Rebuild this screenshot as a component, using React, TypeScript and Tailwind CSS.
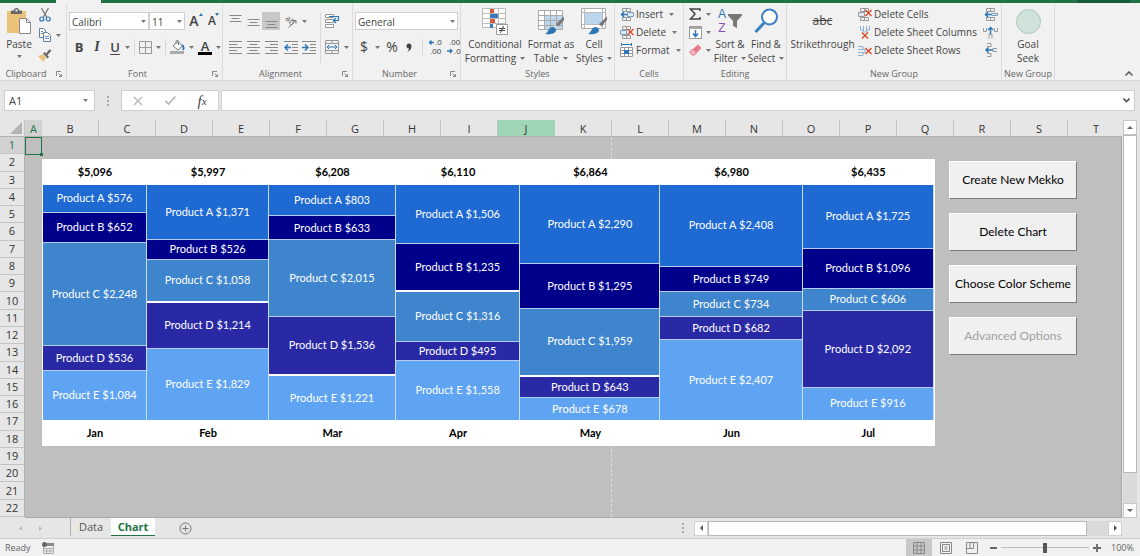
import React from "react";

const UI = "font-['Open_Sans',sans-serif]";
const CAL = "font-['Lato',sans-serif]";

function Caret({ className = "" }: { className?: string }) {
  return (
    <svg className={`shrink-0 ${className}`} width="5" height="3" viewBox="0 0 5 3" aria-hidden="true">
      <path d="M0 0h5L2.5 3z" fill="#777" />
    </svg>
  );
}

type IconProps = { w: number; h: number; children: React.ReactNode; className?: string };
function Icon({ w, h, children, className = "" }: IconProps) {
  return (
    <svg className={`shrink-0 ${className}`} width={w} height={h} viewBox={`0 0 ${w} ${h}`} fill="none" aria-hidden="true">
      {children}
    </svg>
  );
}

function Btn({ label, children, className = "" }: { label: string; children: React.ReactNode; className?: string }) {
  return (
    <button aria-label={label} className={`flex shrink-0 items-center justify-center ${className}`}>
      {children}
    </button>
  );
}

function Group({
  label,
  launcher = false,
  className,
  children,
}: {
  label: string;
  launcher?: boolean;
  className: string;
  children: React.ReactNode;
}) {
  return (
    <section aria-label={label} className={`flex shrink-0 flex-col border-r border-[#dcdcdc] ${className}`}>
      <div className="flex h-[65px] shrink-0">{children}</div>
      <div className="flex h-3 items-center text-[#666]">
        <span className="flex-1 text-center text-[9px] leading-3 whitespace-nowrap">{label}</span>
        {launcher && (
          <Btn label={`${label} settings`} className="w-3.5">
            <Icon w={6} h={6}>
              <path d="M.5 5V.5H5M2.5 2.5l3 3M5.5 3v2.5H3" stroke="#888" />
            </Icon>
          </Btn>
        )}
      </div>
    </section>
  );
}

function BigButton({
  lines,
  icon,
  caret = false,
  className,
}: {
  lines: string[];
  icon: React.ReactNode;
  caret?: boolean;
  className: string;
}) {
  return (
    <button className={`flex shrink-0 flex-col items-center pt-1 ${className}`}>
      <span className="flex h-7 items-center">{icon}</span>
      <span className="mt-0.5 flex flex-col items-center">
        {lines.map((line, i) => (
          <span key={line} className="flex h-3.5 items-center gap-1 text-[10px] leading-3.5 whitespace-nowrap">
            {line}
            {caret && i === lines.length - 1 && <Caret />}
          </span>
        ))}
      </span>
    </button>
  );
}

function SmallButton({ label, icon, caret = false }: { label: string; icon: React.ReactNode; caret?: boolean }) {
  return (
    <button className="flex h-[18px] items-center gap-0.5 text-[10px] leading-3.5 whitespace-nowrap">
      <span className="flex w-3.5 justify-center">{icon}</span>
      {label}
      {caret && <Caret className="ml-1" />}
    </button>
  );
}

function Combo({ label, value, options, className }: { label: string; value: string; options: string[]; className: string }) {
  return (
    <span className={`relative h-[18px] shrink-0 border border-[#cfcfcf] bg-white ${className}`}>
      <select
        aria-label={label}
        defaultValue={value}
        className="block h-4 w-full appearance-none bg-transparent pt-px pl-0.5 text-[10px] leading-4 text-[#444] outline-none"
      >
        {options.map((o) => (
          <option key={o}>{o}</option>
        ))}
      </select>
      <Caret className="pointer-events-none absolute top-[7px] right-0.5" />
    </span>
  );
}

const Lines = ({ d }: { d: string }) => (
  <Icon w={13} h={13}>
    <path d={d} stroke="#888" />
  </Icon>
);

const Sep = ({ className = "h-4" }: { className?: string }) => <span className={`w-px shrink-0 bg-[#d8d8d8] ${className}`} />;

const BrushOverlay = () => (
  <g>
    <path d="M26 8.5 18 16l2.5 2.5L26 12z" fill="#777" />
    <path d="M7 26c3-1 3-5.500 6.500-6.800 2-.7 4.500 1 4.500 3C17.800 25.500 12 27 7 26z" fill="#2e75b6" />
    <path d="m16.500 17.500 3 3" stroke="#fff" />
  </g>
);

const CellBits = () => <path d="M2.500.500h8v3h-8zM6.500.500v3M2.500 9.500h8v3h-8zM6.500 9.500v3" stroke="#999" />;
const RedX = ({ x, y }: { x: number; y: number }) => (
  <path d={`M${x} ${y}l6 6M${x + 6} ${y}l-6 6`} stroke="#d9482b" strokeWidth="1.400" />
);

const ClipboardIcon = (
  <Icon w={26} h={27}>
    <path d="M1 3h19v22H1z" fill="#ebc27a" />
    <path d="M5 2.500h3C8 .800 9 0 10.500 0S13 .800 13 2.500h3V6H5z" fill="#666" />
    <path d="M9.500 1.500h2v2h-2z" fill="#f1f1f1" />
    <path d="M13.500 10.500h7l4 4v11h-11z" fill="#fff" stroke="#888" />
    <path d="M20.500 10.500v4h4" stroke="#888" />
  </Icon>
);

function Ribbon() {
  return (
    <div className="flex h-[78px] shrink-0 overflow-hidden border-b border-[#d5d5d5] bg-[#f1f1f1] text-[#444]">
      <Group label="Clipboard" launcher className="w-[67px]">
        <button className="flex w-[38px] flex-col items-center pt-1">
          <span className="flex h-7 items-center">{ClipboardIcon}</span>
          <span className="mt-0.5 text-[10px] leading-3.5">Paste</span>
          <Caret className="mt-1" />
        </button>
        <div className="flex flex-col items-start gap-1 pt-1">
          <Btn label="Cut" className="h-4 w-3.5">
            <Icon w={12} h={14}>
              <path d="m2.500 0 5.300 9.500M9.500 0 4.200 9.500" stroke="#777" strokeWidth="1.300" />
              <circle cx="2.800" cy="11" r="2" stroke="#2e75b6" strokeWidth="1.200" />
              <circle cx="9.200" cy="11" r="2" stroke="#2e75b6" strokeWidth="1.200" />
            </Icon>
          </Btn>
          <Btn label="Copy" className="h-4 gap-1">
            <Icon w={14} h={14}>
              <path d="M1.500.500h4l2 2v7h-6z" fill="#fff" stroke="#6b7f99" />
              <path d="M5.500 4.500h4l3 3v6h-7z" fill="#fff" stroke="#6b7f99" />
              <path d="M7 8.500h4M7 10.500h4M3 3.500h2M3 5.500h2" stroke="#5b93cc" />
            </Icon>
            <Caret />
          </Btn>
          <Btn label="Format painter" className="h-4 w-3.5">
            <Icon w={14} h={13}>
              <path d="m0 7 5-1.500 3 3.500-3 4z" fill="#ebc27a" />
              <path d="m5 4.500 4.500 5 1.500-1.500-4.500-5z" fill="#666" />
              <path d="M8.500 5.500 12.500 1" stroke="#666" strokeWidth="2.200" />
            </Icon>
          </Btn>
        </div>
      </Group>

      <Group label="Font" launcher className="w-[156px]">
        <div className="flex flex-col gap-[7px] pt-[9px] pl-0.5">
          <div className="flex items-center">
            <Combo label="Font name" value="Calibri" options={["Calibri", "Arial"]} className="w-20" />
            <Combo label="Font size" value="11" options={["10", "11", "12"]} className="w-9" />
            <Btn label="Increase font size" className="relative w-[18px] text-[14px] leading-4 font-semibold">
              A
              <Icon w={4} h={3} className="absolute top-0 right-0">
                <path d="M0 3h4L2 0z" fill="#2e75b6" />
              </Icon>
            </Btn>
            <Btn label="Decrease font size" className="relative w-[18px] text-[12px] leading-4 font-semibold">
              A
              <Icon w={4} h={3} className="absolute top-0 right-0.5">
                <path d="M0 0h4L2 3z" fill="#2e75b6" />
              </Icon>
            </Btn>
          </div>
          <div className="flex h-5 items-center">
            <Btn label="Bold" className="w-5 text-[13px] leading-5 font-bold">B</Btn>
            <Btn label="Italic" className="w-4 font-['Liberation_Serif',serif] text-[14px] leading-5 font-bold italic">I</Btn>
            <Btn label="Underline" className="w-5 text-[13px] leading-5 font-semibold underline underline-offset-2">U</Btn>
            <Caret />
            <Sep className="mx-1 h-4" />
            <Btn label="Borders">
              <Icon w={13} h={13}>
                <path d="M.500.500h12v12H.500zM6.500.500v12M.500 6.500h12" stroke="#999" />
              </Icon>
            </Btn>
            <Caret className="ml-1" />
            <Sep className="mx-1 h-4" />
            <Btn label="Fill colour">
              <Icon w={15} h={14}>
                <path d="m3 6 5-4.500L12.500 6 8 10z" fill="#fff" stroke="#777" />
                <path d="M6 4V1.500C6 0 8.500 0 8.500 1.500V5" stroke="#777" />
                <path d="M12 5c1.500 1 2 3 1 5" stroke="#2e75b6" strokeWidth="1.800" />
                <path d="M0 11h14v3H0z" fill="#aaa" />
              </Icon>
            </Btn>
            <Caret className="ml-1" />
            <Btn label="Font colour" className="ml-1 w-3.5 flex-col">
              <span className="h-3 text-[13px] leading-3 font-semibold">A</span>
              <span className="h-[3px] w-3.5 bg-black" />
            </Btn>
            <Caret className="ml-1" />
          </div>
        </div>
      </Group>

      <Group label="Alignment" launcher className="w-[130px]">
        <div className="flex flex-col gap-[7px] pt-[9px] pl-[3px]">
          <div className="flex h-[18px] items-center">
            <Btn label="Top align" className="h-[18px] w-[18px]"><Lines d="M.500 .500h12M2.500 3.500h8M.500 6.500h12" /></Btn>
            <Btn label="Middle align" className="h-[18px] w-[18px]"><Lines d="M.500 4.500h12M2.500 7.500h8M.500 10.500h12" /></Btn>
            <Btn label="Bottom align" className="h-[18px] w-[18px] bg-[#c8c8c8]"><Lines d="M.500 6.500h12M2.500 9.500h8M.500 12.500h12" /></Btn>
            <Btn label="Orientation" className="ml-0.5 gap-1">
              <Icon w={16} h={16}>
                <text x="3" y="6" fontSize="8" fill="#555" transform="rotate(45 3 6)" fontFamily="Open Sans, sans-serif">ab</text>
                <path d="M6.500 14.500 14 7.500M14 10.500v-3h-3" stroke="#777" />
              </Icon>
              <Caret />
            </Btn>
          </div>
          <div className="flex h-5 items-center">
            <Btn label="Align left" className="w-[18px]"><Lines d="M0 .500h13M0 3.500h8M0 6.500h13M0 9.500h8M0 12.500h13" /></Btn>
            <Btn label="Centre" className="w-[18px]"><Lines d="M0 .500h13M2.500 3.500h8M0 6.500h13M2.500 9.500h8M0 12.500h13" /></Btn>
            <Btn label="Align right" className="w-[18px]"><Lines d="M0 .500h13M5 3.500h8M0 6.500h13M5 9.500h8M0 12.500h13" /></Btn>
            <Btn label="Decrease indent" className="ml-0.5 w-[18px]">
              <Icon w={14} h={13}>
                <path d="M0 .500h14M8 3.500h6M8 6.500h6M8 9.500h6M0 12.500h14" stroke="#888" />
                <path d="M7 6.500H1.500M4 3.500l-3 3 3 3" stroke="#2e75b6" strokeWidth="1.500" />
              </Icon>
            </Btn>
            <Btn label="Increase indent" className="w-[18px]">
              <Icon w={14} h={13}>
                <path d="M0 .500h14M8 3.500h6M8 6.500h6M8 9.500h6M0 12.500h14" stroke="#888" />
                <path d="M0 6.500h5.500M3 3.500l3 3-3 3" stroke="#2e75b6" strokeWidth="1.500" />
              </Icon>
            </Btn>
          </div>
        </div>
        <Sep className="mt-2.5 ml-0.5 h-[50px]" />
        <div className="flex flex-col gap-[7px] pt-[9px] pl-1">
          <Btn label="Wrap text" className="h-[18px] w-[15px]">
            <Icon w={15} h={14}>
              <path d="M.500.500h8v3h-8zM.500 5.500h8v3h-8zM.500 10.500h8v3h-8z" fill="#fff" stroke="#999" />
              <path d="M4 2.500h9.500v4H9M11 4 8.500 6.500 11 9" stroke="#2e75b6" strokeWidth="1.200" />
            </Icon>
          </Btn>
          <Btn label="Merge and centre" className="h-5 gap-1">
            <Icon w={15} h={14}>
              <path d="M.500.500h13v13H.500zM.500 3.500h13M.500 10.500h13M7 .500v3M7 10.500v3" stroke="#999" />
              <path d="M2 7h10M4 5 2 7l2 2M10 5l2 2-2 2" stroke="#2e75b6" />
            </Icon>
            <Caret />
          </Btn>
        </div>
      </Group>

      <Group label="Number" launcher className="w-[108px]">
        <div className="flex flex-col gap-[7px] pt-[9px] pl-0.5">
          <Combo label="Number format" value="General" options={["General", "Currency"]} className="w-[103px]" />
          <div className="flex h-5 items-center">
            <Btn label="Currency" className="w-[18px] text-[14px] leading-5">$</Btn>
            <Caret className="ml-0.5" />
            <Btn label="Percent" className="ml-1 w-4 text-[14px] leading-5">%</Btn>
            <Btn label="Comma style" className="w-[18px]">
              <Icon w={6} h={9}>
                <path d="M5.500 3c0 3-1.500 5-4.500 6C2.500 7.500 3 6.500 3 5.500A2.500 2.500 0 1 1 5.500 3z" fill="#444" />
              </Icon>
            </Btn>
            <Sep className="ml-1 h-4" />
            <Btn label="Increase decimal" className="ml-1 w-[18px]">
              <Icon w={16} h={20}>
                <text x="7" y="8" fontSize="8" fill="#444" fontFamily="Liberation Sans, sans-serif">.0</text>
                <text x="2" y="17" fontSize="8" fill="#444" fontFamily="Liberation Sans, sans-serif">.00</text>
                <path d="M6 5.500H1.500M3.500 3.500l-2 2 2 2" stroke="#2e75b6" strokeWidth="1.300" />
              </Icon>
            </Btn>
            <Btn label="Decrease decimal" className="w-[18px]">
              <Icon w={16} h={20}>
                <text x="3" y="8" fontSize="8" fill="#444" fontFamily="Liberation Sans, sans-serif">.00</text>
                <text x="8" y="17" fontSize="8" fill="#444" fontFamily="Liberation Sans, sans-serif">.0</text>
                <path d="M1 14h5M4 12l2 2-2 2" stroke="#2e75b6" strokeWidth="1.300" />
              </Icon>
            </Btn>
          </div>
        </div>
      </Group>

      <Group label="Styles" className="w-[154px]">
        <BigButton
          caret
          className="w-[68px]"
          lines={["Conditional", "Formatting"]}
          icon={
            <Icon w={27} h={27}>
              <path d="M.500.500h23v19H.500zM.500 5.500h23M.500 10.500h23M.500 15.500h23M8.500.500v19M16.500.500v19" fill="#fff" stroke="#bbb" />
              <path d="M8 1h4v4H8zM8 11h5v4H8z" fill="#d9583b" />
              <path d="M8 6h8v4H8zM8 16h3v4H8z" fill="#3c78b8" />
              <path d="M14.500 16.500h11v10h-11z" fill="#fff" stroke="#999" />
              <path d="M17 20.500h6M17 22.500h6M21.500 18l-3 7" stroke="#444" />
            </Icon>
          }
        />
        <BigButton
          caret
          className="w-11"
          lines={["Format as", "Table"]}
          icon={
            <Icon w={27} h={27}>
              <path d="M.500 2.500h24v19H.500z" fill="#fff" />
              <path d="M7 7h18v15H7z" fill="#bcd6ee" />
              <path d="M.500 2.500h24v19H.500zM.500 7.500h24M.500 12.500h24M.500 17.500h24M6.500 2.500v19M12.500 2.500v19M18.500 2.500v19" stroke="#aaa" />
              <BrushOverlay />
            </Icon>
          }
        />
        <BigButton
          caret
          className="w-[42px]"
          lines={["Cell", "Styles"]}
          icon={
            <Icon w={27} h={27}>
              <path d="M.500.500h24v20H.500z" fill="#fff" stroke="#aaa" />
              <path d="M4 5h18v11H4z" fill="#bcd6ee" />
              <path d="M.500 4.500h24M.500 16.500h24M3.500.500v20M21.500.500v20" stroke="#bbb" />
              <BrushOverlay />
            </Icon>
          }
        />
      </Group>

      <Group label="Cells" className="w-[69px]">
        <div className="flex flex-col pt-0.5 pl-[5px]">
          <SmallButton
            caret
            label="Insert"
            icon={
              <Icon w={14} h={13}>
                <CellBits />
                <path d="M7.500 4.500h6v4h-6z" fill="#dce9f5" stroke="#7a9cc0" />
                <path d="M7 6.500H1.500M4 4 1.500 6.500 4 9" stroke="#2e75b6" strokeWidth="1.500" />
              </Icon>
            }
          />
          <SmallButton
            caret
            label="Delete"
            icon={
              <Icon w={14} h={13}>
                <CellBits />
                <path d="M.500 4.500h6v4h-6z" fill="#dce9f5" stroke="#7a9cc0" />
                <RedX x={7.5} y={3} />
              </Icon>
            }
          />
          <SmallButton
            caret
            label="Format"
            icon={
              <Icon w={14} h={14}>
                <path d="M1.500 0v3M11.500 0v3M2 1.500h9" stroke="#2e75b6" />
                <path d="M.500 4.500h12v9H.500zM.500 7.500h12M.500 10.500h12M4.500 4.500v9M8.500 4.500v9" fill="#fff" stroke="#999" />
                <path d="M4 7h5v4H4z" fill="#2e75b6" />
              </Icon>
            }
          />
        </div>
      </Group>

      <Group label="Editing" className="w-[103px]">
        <div className="flex w-7 flex-col items-start pt-0.5 pl-[5px]">
          <Btn label="AutoSum" className="h-[18px] gap-1">
            <Icon w={13} h={12}>
              <path d="M11 3V1H1.500L6 6l-4.500 5H11V9" stroke="#444" strokeWidth="1.500" />
            </Icon>
            <Caret />
          </Btn>
          <Btn label="Fill" className="h-[18px] gap-1">
            <Icon w={13} h={13}>
              <path d="M.500.500h12v12H.500z" fill="#fff" stroke="#999" />
              <path d="M1 1h11v2H1z" fill="#aaa" />
              <path d="M6.500 4v6M4 7.500l2.500 3 2.500-3" stroke="#2e75b6" strokeWidth="1.500" />
            </Icon>
            <Caret />
          </Btn>
          <Btn label="Clear" className="h-[18px] gap-1">
            <Icon w={13} h={12}>
              <path d="m4 5 5-4.500L12.500 4l-5 5z" fill="#e8788a" />
              <path d="M4 5 .500 8 3 11h2.500l2-2z" fill="#f4b8c2" stroke="#e8788a" />
            </Icon>
            <Caret />
          </Btn>
        </div>
        <BigButton
          caret
          className="w-9"
          lines={["Sort &", "Filter"]}
          icon={
            <span className="flex items-center gap-0.5">
              <span className="flex flex-col items-center font-['Liberation_Sans',sans-serif] text-[12px] leading-3.5">
                <span className="text-[#2e75b6]">A</span>
                <span className="text-[#8b4fb8]">Z</span>
              </span>
              <Icon w={14} h={14}>
                <path d="M0 0h14v1.500L9 7v7l-4-2V7L0 1.500z" fill="#777" />
              </Icon>
            </span>
          }
        />
        <BigButton
          caret
          className="w-9"
          lines={["Find &", "Select"]}
          icon={
            <Icon w={25} h={26}>
              <circle cx="15.500" cy="9" r="7.500" fill="#fff" stroke="#3b7fc4" strokeWidth="2" />
              <path d="M10 15 1.500 24" stroke="#3b7fc4" strokeWidth="3" />
            </Icon>
          }
        />
      </Group>

      <Group label="New Group" className="w-[215px]">
        <BigButton
          className="w-[71px]"
          lines={["Strikethrough"]}
          icon={<span className="text-[12px] leading-4 line-through">abc</span>}
        />
        <div className="flex w-[125px] flex-col pt-0.5">
          <SmallButton
            label="Delete Cells"
            icon={
              <Icon w={14} h={13}>
                <CellBits />
                <path d="M.500 4.500h6v4h-6z" fill="#dce9f5" stroke="#999" />
                <RedX x={7.5} y={2} />
              </Icon>
            }
          />
          <SmallButton
            label="Delete Sheet Columns"
            icon={
              <Icon w={14} h={13}>
                <path d="M2.500 0v4h3M11.500 0v4h-3M5.500 0v6h3V0" stroke="#8fb0d4" />
                <RedX x={4} y={6.5} />
              </Icon>
            }
          />
          <SmallButton
            label="Delete Sheet Rows"
            icon={
              <Icon w={14} h={13}>
                <path d="M0 2.500h5v3M0 5.500h7v3H0M0 11.500h5v-3" stroke="#8fb0d4" />
                <RedX x={7.5} y={4} />
              </Icon>
            }
          />
        </div>
        <div className="flex flex-col pt-0.5">
          <Btn label="Insert cells" className="h-[18px]">
            <Icon w={14} h={13}>
              <CellBits />
              <path d="M7.500 5.500h6v2h-6z" fill="#dce9f5" stroke="#7a9cc0" />
              <path d="M7 6.500H1.500M4 4 1.500 6.500 4 9" stroke="#2e75b6" strokeWidth="1.500" />
            </Icon>
          </Btn>
          <Btn label="Insert sheet columns" className="h-[18px]">
            <Icon w={15} h={13}>
              <path d="M.500 2v3.500h3V2M11.500 2v3.500h3V2M6 12.500v-4h3v4" stroke="#999" />
              <path d="M7.500 8V2M5 4l2.500-2.500L10 4" stroke="#2e75b6" strokeWidth="1.500" />
            </Icon>
          </Btn>
          <Btn label="Insert sheet rows" className="h-[18px]">
            <Icon w={14} h={14}>
              <path d="M3 .500h4v3H3M3 13.500h4v-3H3M13 5.500H9v3h4" stroke="#999" />
              <path d="M9 7H2M4.500 4.500 2 7l2.500 2.500" stroke="#2e75b6" strokeWidth="1.500" />
            </Icon>
          </Btn>
        </div>
      </Group>

      <Group label="New Group" className="w-[53px]">
        <BigButton
          className="w-[52px]"
          lines={["Goal", "Seek"]}
          icon={<span className="block size-[25px] rounded-full border border-[#a9c9bd] bg-[#cfe3da]" />}
        />
      </Group>
      <div className="flex flex-1 items-end justify-end pr-[7px] pb-1">
        <Btn label="Collapse ribbon">
          <Icon w={8} h={5}>
            <path d="m.500 4.500 3.500-3.500 3.500 3.500" stroke="#555" strokeWidth="1.500" />
          </Icon>
        </Btn>
      </div>
    </div>
  );
}

function FormulaBar() {
  return (
    <div className="flex h-[21px] shrink-0 items-stretch pr-[5px] pl-1">
      <div className="relative w-[91px] shrink-0 border border-[#cfcfcf] bg-white">
        <input
          aria-label="Name box"
          defaultValue="A1"
          className="block h-[19px] w-full bg-transparent pl-1 text-[11px] leading-4 text-[#444] outline-none"
        />
        <Caret className="pointer-events-none absolute top-2 right-1.5" />
      </div>
      <div className="flex w-[26px] shrink-0 items-center justify-center">
        <Icon w={2} h={10}>
          <path d="M0 0h2v2H0zM0 4h2v2H0zM0 8h2v2H0z" fill="#aaa" />
        </Icon>
      </div>
      <div className="flex w-[98px] shrink-0 items-center justify-around border border-[#cfcfcf] bg-white">
        <Btn label="Cancel" className="w-6">
          <Icon w={10} h={10}>
            <path d="m1 1 8 8M9 1 1 9" stroke="#bbb" strokeWidth="1.500" />
          </Icon>
        </Btn>
        <Btn label="Enter" className="w-6">
          <Icon w={11} h={9}>
            <path d="m.500 5 3 3 7-7.500" stroke="#bbb" strokeWidth="1.800" />
          </Icon>
        </Btn>
        <Btn label="Insert function" className="w-6 font-['Liberation_Serif',serif] text-[15px] leading-4 text-[#444] italic">
          f<span className="text-[11px]">x</span>
        </Btn>
      </div>
      <div className="ml-0.5 flex flex-1 items-center border border-[#cfcfcf] bg-white pr-1">
        <input aria-label="Formula" className="min-w-0 flex-1 bg-transparent pl-1 text-[11px] outline-none" />
        <Icon w={7} h={5}>
          <path d="m.500.500 3 3 3-3" stroke="#555" strokeWidth="1.600" />
        </Icon>
      </div>
    </div>
  );
}

const COLUMNS = "BCDEFGHIJKLMNOPQRST".split("");
const ROWS = Array.from({ length: 22 }, (_, i) => i + 1);
const PRODUCTS = ["A", "B", "C", "D", "E"];
const FILLS = ["bg-[#1e69d2]", "bg-[#00008b]", "bg-[#3e85cd]", "bg-[#2a29a5]", "bg-[#5fa3f3]"];

const MONTHS = [
  { name: "Jan", values: [576, 652, 2248, 536, 1084], heavy: -1 },
  { name: "Feb", values: [1371, 526, 1058, 1214, 1829], heavy: 2 },
  { name: "Mar", values: [803, 633, 2015, 1536, 1221], heavy: 3 },
  { name: "Apr", values: [1506, 1235, 1316, 495, 1558], heavy: 1 },
  { name: "May", values: [2290, 1295, 1959, 643, 678], heavy: 2 },
  { name: "Jun", values: [2408, 749, 734, 682, 2407], heavy: -1 },
  { name: "Jul", values: [1725, 1096, 606, 2092, 916], heavy: -1 },
];
const MONTH_TOTALS = [5096, 5997, 6208, 6110, 6864, 6980, 6435];
const GRAND_TOTAL = MONTH_TOTALS.reduce((a, b) => a + b, 0);

const money = (n: number) => `$${n.toLocaleString("en-US")}`;

function MekkoChart() {
  return (
    <div className={`flex h-[287px] min-w-0 flex-1 bg-white px-px text-[11px] ${CAL}`}>
      {MONTHS.map((m, mi) => {
        const sum = m.values.reduce((a, b) => a + b, 0);
        return (
          <div key={m.name} className="flex min-w-0 flex-col" style={{ width: `${(MONTH_TOTALS[mi] / GRAND_TOTAL) * 100}%` }}>
            <div className="flex h-[26px] shrink-0 items-center justify-center font-bold text-black">
              {money(MONTH_TOTALS[mi])}
            </div>
            <div className="flex h-[235px] shrink-0 flex-col border-r border-[#c8dcf4]">
              {m.values.map((v, i) => {
                const edge =
                  i === 0 ? "" : i - 1 === m.heavy ? "border-t-2 border-white" : "border-t border-[#b5cdec]";
                return (
                  <div
                    key={PRODUCTS[i]}
                    className={`flex items-center justify-center whitespace-nowrap text-white ${FILLS[i]} ${edge}`}
                    style={{ height: `${(v / sum) * 100}%` }}
                  >
                    Product {PRODUCTS[i]} {money(v)}
                  </div>
                );
              })}
            </div>
            <div className="flex h-[26px] shrink-0 items-center justify-center font-bold text-black">{m.name}</div>
          </div>
        );
      })}
    </div>
  );
}

function MacroButton({ label, disabled = false }: { label: string; disabled?: boolean }) {
  return (
    <button
      disabled={disabled}
      className={`h-[38px] w-32 border border-t-white border-r-[#7a7a7a] border-b-[#7a7a7a] border-l-white bg-[#f0f0f0] text-[12px] whitespace-nowrap text-black disabled:text-[#a0a0a0] ${CAL}`}
    >
      {label}
    </button>
  );
}

function Sheet() {
  return (
    <div className="flex min-h-0 flex-1">
      <div className="flex min-w-0 flex-1 flex-col">
        <div className="flex h-[17px] shrink-0 overflow-hidden border-b border-[#b0b0b0] text-[11px] leading-[18px] text-[#333]">
          <div className="flex w-[25px] shrink-0 items-end justify-end border-r border-[#c4c4c4] pr-0.5 pb-0.5">
            <Icon w={12} h={12}>
              <path d="M12 0v12H0z" fill="#b3b3b3" />
            </Icon>
          </div>
          <div className="w-[17px] shrink-0 bg-[#d2d2d2] text-center text-[#217346]">A</div>
          {COLUMNS.map((c) => (
            <div
              key={c}
              className={`w-[57px] shrink-0 border-r text-center ${c === "J" ? "border-[#9fd5b7] bg-[#9fd5b7]" : "border-[#c4c4c4]"}`}
            >
              {c}
            </div>
          ))}
        </div>
        <div className="flex min-h-0 flex-1 overflow-hidden">
          <div className="grid h-[380px] w-[25px] shrink-0 auto-rows-fr border-r border-[#b0b0b0] text-[11px] text-[#333]">
            {ROWS.map((r) => (
              <div
                key={r}
                className={`flex min-h-0 items-center justify-center border-b border-[#c4c4c4] leading-4 ${r === 1 ? "bg-[#d2d2d2] text-[#217346]" : ""}`}
              >
                {r}
              </div>
            ))}
          </div>
          <div className="relative flex min-w-0 flex-1 items-start overflow-hidden border-r border-b border-[#a8a8a8] bg-[#bfbfbf] pt-[22px] pr-11 pl-[17px]">
            <div className="absolute inset-y-0 left-[586px] border-l border-dashed border-[#dedede]" />
            <div className="absolute top-0 left-0 h-[18px] w-[17px] border border-[#217346]">
              <span className="absolute -right-0.5 -bottom-0.5 size-[3px] bg-[#217346]" />
            </div>
            <div className="relative flex min-w-0 flex-1 gap-3.5">
              <MekkoChart />
              <div className="flex shrink-0 flex-col gap-3.5 pt-0.5">
                <MacroButton label="Create New Mekko" />
                <MacroButton label="Delete Chart" />
                <MacroButton label="Choose Color Scheme" />
                <MacroButton label="Advanced Options" disabled />
              </div>
            </div>
          </div>
        </div>
      </div>
      <div className="flex w-[18px] shrink-0 flex-col items-center pr-0.5">
        <Btn label="Scroll up" className="h-[15px] w-3.5 border border-[#c8c8c8] bg-white">
          <Icon w={6} h={3}><path d="M0 3h6L3 0z" fill="#666" /></Icon>
        </Btn>
        <div className="flex w-3.5 flex-1 flex-col bg-[#dadada]">
          <div className="w-3.5 flex-[11] border border-[#b8b8b8] bg-white" />
          <div className="flex-1" />
        </div>
        <Btn label="Scroll down" className="h-[15px] w-3.5 border border-[#c8c8c8] bg-white">
          <Icon w={6} h={3}><path d="M0 0h6L3 3z" fill="#666" /></Icon>
        </Btn>
      </div>
    </div>
  );
}

function TabBar() {
  return (
    <div className="flex h-5 shrink-0 items-center pr-[18px] text-[11px]">
      <div className="flex w-[70px] shrink-0 justify-center gap-4 pr-2.5">
        <Btn label="Previous sheet" className="w-1"><Icon w={3} h={5}><path d="M3 0v5L0 2.500z" fill="#bbb" /></Icon></Btn>
        <Btn label="Next sheet" className="w-1"><Icon w={3} h={5}><path d="M0 0v5l3-2.500z" fill="#bbb" /></Icon></Btn>
      </div>
      <nav className="flex h-full items-start leading-[18px]">
        <a href="#data" className="h-[18px] w-[41px] border-l border-[#b0b0b0] text-center text-[#555]">Data</a>
        <a href="#chart" className="h-[18px] w-11 border-b border-[#217346] bg-white text-center font-bold text-[#217346]">
          Chart
        </a>
      </nav>
      <Btn label="New sheet" className="ml-6">
        <Icon w={13} h={13}>
          <circle cx="6.500" cy="6.500" r="5.500" stroke="#777" />
          <path d="M6.500 3.500v6M3.500 6.500h6" stroke="#777" />
        </Icon>
      </Btn>
      <div className="flex-1" />
      <Icon w={2} h={10} className="mr-2.5">
        <path d="M0 0h2v2H0zM0 4h2v2H0zM0 8h2v2H0z" fill="#aaa" />
      </Icon>
      <div className="flex w-[428px] shrink-0 bg-[#dadada]">
        <Btn label="Scroll left" className="h-[15px] w-3.5 border border-[#d0d0d0] bg-white">
          <Icon w={3} h={6}><path d="M3 0v6L0 3z" fill="#555" /></Icon>
        </Btn>
        <div className="h-[15px] flex-[18] border border-[#b8b8b8] bg-white" />
        <div className="flex-1" />
        <Btn label="Scroll right" className="h-[15px] w-3.5 border border-[#d0d0d0] bg-white">
          <Icon w={3} h={6}><path d="M0 0v6l3-3z" fill="#555" /></Icon>
        </Btn>
      </div>
    </div>
  );
}

function StatusBar() {
  return (
    <div className="flex h-[18px] shrink-0 items-stretch border-t border-[#cfcfcf] bg-[#f1f1f1] text-[9px] text-[#666]">
      <span className="flex w-[42px] items-center pl-[5px]">Ready</span>
      <Btn label="Record macro">
        <Icon w={13} h={12}>
          <path d="M1.500 3.500h10v8h-10zM1.500 6.500h10M1.500 9h10M4.500 6v5M8 6v5" stroke="#aaa" />
          <path d="M5 1h7v3H5z" fill="#888" />
          <circle cx="2.500" cy="2.500" r="2.500" fill="#666" />
        </Icon>
      </Btn>
      <div className="flex-1" />
      <Btn label="Normal view" className="w-[26px] bg-[#c8c8c8]">
        <Icon w={12} h={12}>
          <path d="M.500.500h11v11H.500zM.500 4h11M.500 8h11M4 .500v11M8 .500v11" stroke="#888" />
        </Icon>
      </Btn>
      <Btn label="Page layout view" className="w-[27px]">
        <Icon w={12} h={12}>
          <path d="M.500.500h11v11H.500zM2.500 2.500h7v7h-7zM4.500 5h3M4.500 7h3" stroke="#888" />
        </Icon>
      </Btn>
      <Btn label="Page break view" className="w-[26px]">
        <Icon w={12} h={12}>
          <path d="M.500.500h11v11H.500zM.500 6.500h7v-6M4 .500v6" stroke="#888" />
        </Icon>
      </Btn>
      <Btn label="Zoom out" className="w-4">
        <Icon w={7} h={2}><path d="M0 0h7v2H0z" fill="#666" /></Icon>
      </Btn>
      <span className="flex w-[88px] items-center">
        <input
          type="range"
          aria-label="Zoom"
          defaultValue={50}
          className="h-px w-full appearance-none bg-[#bbb] [&::-webkit-slider-thumb]:h-2.5 [&::-webkit-slider-thumb]:w-1 [&::-webkit-slider-thumb]:appearance-none [&::-webkit-slider-thumb]:bg-[#555]"
        />
      </span>
      <Btn label="Zoom in" className="w-4">
        <Icon w={8} h={8}><path d="M4 0v8M0 4h8" stroke="#666" strokeWidth="1.800" /></Icon>
      </Btn>
      <span className="flex w-[35px] items-center justify-center">100%</span>
    </div>
  );
}

export default function App() {
  return (
    <div className={`flex h-screen min-h-[556px] flex-col bg-[#e6e6e6] ${UI}`}>
      <div className="flex h-[3px] shrink-0">
        <div className="w-14 bg-[#217346]" />
        <div className="w-[45px] bg-[#f1f1f1]" />
        <div className="flex-1 bg-[#217346]" />
        <div className="w-[53px] bg-[#185c37]" />
        <div className="w-2.5 bg-[#217346]" />
      </div>
      <Ribbon />
      <div className="h-[9px] shrink-0" />
      <FormulaBar />
      <div className="h-[9px] shrink-0" />
      <Sheet />
      <TabBar />
      <StatusBar />
    </div>
  );
}
